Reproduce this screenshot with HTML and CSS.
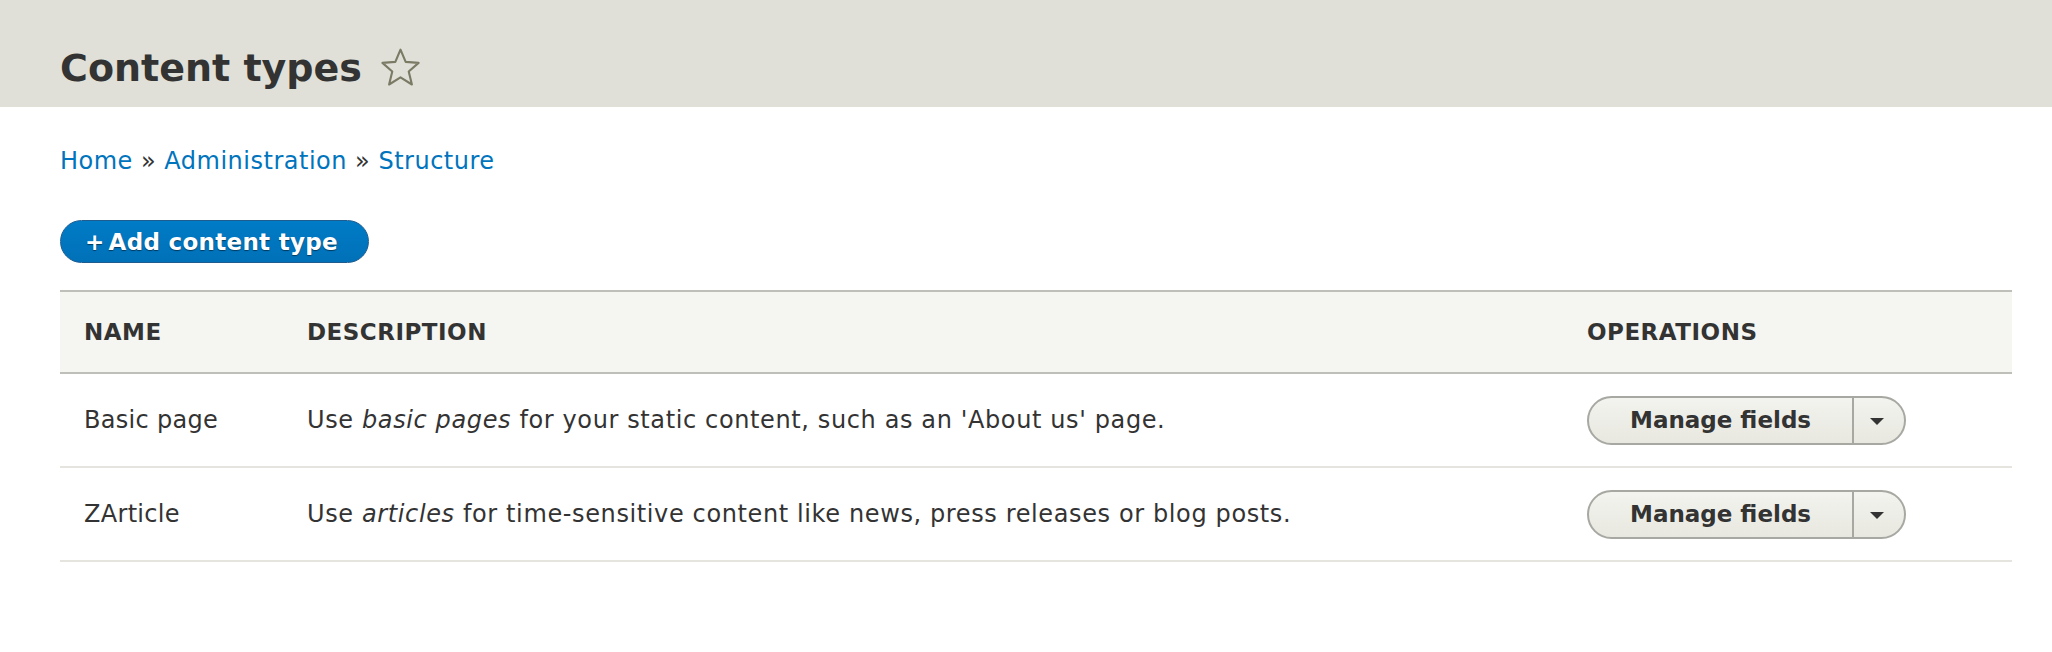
FILE: index.html
```html
<!DOCTYPE html>
<html lang="en">
<head>
<meta charset="utf-8">
<title>Content types</title>
<link rel="stylesheet" href="styles.css">
</head>
<body>
<header class="page-header">
  <h1 class="page-title">Content types</h1>
  <svg class="star" viewBox="0 0 40 40" width="47" height="47" aria-hidden="true">
    <path d="M20 4 L24.4 14.4 L35.4 15.2 L27 22.5 L29.7 33.6 L20 27.6 L10.3 33.6 L13 22.5 L4.6 15.2 L15.6 14.4 Z" fill="none" stroke="#7a7a65" stroke-width="1.8" stroke-linejoin="round"/>
  </svg>
</header>
<main class="content">
  <nav class="breadcrumb">
    <a href="#">Home</a> <span class="sep">»</span> <a href="#">Administration</a> <span class="sep">»</span> <a href="#">Structure</a>
  </nav>
  <div class="actions">
    <a class="button-primary" href="#"><span class="plus">+</span>Add content type</a>
  </div>
  <table class="types">
    <colgroup>
      <col class="col-name">
      <col class="col-desc">
      <col class="col-ops">
    </colgroup>
    <thead>
      <tr><th>Name</th><th>Description</th><th>Operations</th></tr>
    </thead>
    <tbody>
      <tr>
        <td>Basic page</td>
        <td class="desc">Use <em>basic pages</em> for your static content, such as an 'About us' page.</td>
        <td>
          <div class="dropbutton">
            <a class="drop-main" href="#">Manage fields</a>
            <button class="drop-toggle" type="button" aria-label="More"><span class="caret"></span></button>
          </div>
        </td>
      </tr>
      <tr>
        <td>ZArticle</td>
        <td class="desc">Use <em>articles</em> for time-sensitive content like news, press releases or blog posts.</td>
        <td>
          <div class="dropbutton">
            <a class="drop-main" href="#">Manage fields</a>
            <button class="drop-toggle" type="button" aria-label="More"><span class="caret"></span></button>
          </div>
        </td>
      </tr>
    </tbody>
  </table>
</main>
</body>
</html>
```
FILE: styles.css
```css
html, body {
  margin: 0;
  padding: 0;
  background: #ffffff;
}
body {
  font-family: "DejaVu Sans", "Noto Sans", sans-serif;
  color: #333333;
  font-size: 24px;
}
.page-header {
  background: #e0e0d8;
  height: 107px;
  box-sizing: border-box;
  padding: 46px 60px 0 60px;
  display: flex;
  align-items: flex-start;
}
.page-title {
  margin: 0;
  font-size: 38px;
  line-height: 44px;
  font-weight: bold;
  color: #333333;
}
.star {
  margin-left: 15px;
  margin-top: -1px;
}
.content {
  padding: 0 40px 0 60px;
}
.breadcrumb {
  margin-top: 37px;
  line-height: 34px;
  font-size: 24px;
  letter-spacing: 0.5px;
}
.breadcrumb a {
  color: #0074bd;
  text-decoration: none;
}
.breadcrumb .sep {
  color: #333333;
}
.actions {
  margin-top: 42px;
  display: flex;
}
.button-primary {
  display: inline-flex;
  align-items: center;
  height: 43px;
  box-sizing: border-box;
  padding: 0 30px 0 24px;
  border-radius: 22px;
  border: 1px solid #1e5c90;
  background: linear-gradient(#007bc6, #0071b8);
  color: #ffffff;
  font-weight: bold;
  font-size: 23px;
  letter-spacing: 0.3px;
  text-decoration: none;
  text-shadow: 0 1px 1px rgba(0, 0, 0, 0.5);
}
.button-primary .plus {
  margin-right: 4px;
}
.types {
  margin-top: 27px;
  width: 100%;
  border-collapse: collapse;
}
.col-name { width: 223px; }
.col-ops { width: 449px; }
.types thead tr {
  background: #f5f5f2;
  border-top: 2px solid #bfbfba;
  border-bottom: 2px solid #bfbfba;
}
.types th {
  height: 80px;
  padding: 0 24px;
  text-align: left;
  text-transform: uppercase;
  font-weight: bold;
  font-size: 23px;
  letter-spacing: 0.5px;
  vertical-align: middle;
}
.types tbody tr {
  border-bottom: 2px solid #e6e4df;
}
.types td {
  height: 92px;
  padding: 0 24px;
  vertical-align: middle;
  font-size: 24px;
  letter-spacing: 0.3px;
}
.types td.desc {
  letter-spacing: 0.62px;
}
.dropbutton {
  display: inline-flex;
  height: 49px;
  box-sizing: border-box;
  border: 2px solid #a8a8a3;
  border-radius: 25px;
  background: linear-gradient(#f3f3ef, #e8e8e0);
  overflow: hidden;
  letter-spacing: 0;
}
.drop-main {
  display: flex;
  align-items: center;
  padding: 0 41px 0 41px;
  color: #333333;
  font-weight: bold;
  font-size: 23px;
  text-decoration: none;
  border-right: 2px solid #a8a8a3;
}
.drop-toggle {
  width: 50px;
  border: 0;
  background: transparent;
  padding: 0 4px 0 0;
  display: flex;
  align-items: center;
  justify-content: center;
}
.caret {
  width: 0;
  height: 0;
  border-left: 7px solid transparent;
  border-right: 7px solid transparent;
  border-top: 7px solid #333333;
  margin-top: 2px;
}
em {
  font-style: italic;
}
```
